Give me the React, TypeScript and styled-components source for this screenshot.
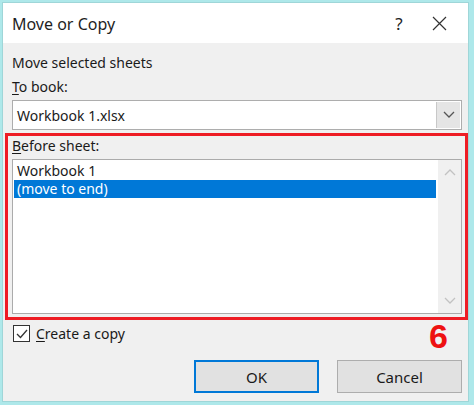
import React from "react";
import styled, { createGlobalStyle } from "styled-components";

const GlobalStyle = createGlobalStyle`
  html, body {
    margin: 0;
    padding: 0;
    background: #aee8ea;
  }
  body {
    font-family: "Noto Sans", "Open Sans", Arial, sans-serif;
  }
`;

const Frame = styled.div`
  width: 474px;
  height: 405px;
  box-sizing: border-box;
  padding: 3px 6px 4px 3px;
  background: #aee8ea;
`;

const Window = styled.div`
  height: 100%;
  display: flex;
  flex-direction: column;
  background: #f0f0f0;
  color: #1a1a1a;
  box-shadow: 0 0 0 1px #9fd6d8;
`;

const TitleBar = styled.div`
  height: 40px;
  flex: none;
  display: flex;
  align-items: center;
  background: #ffffff;
  padding-left: 9px;
`;

const Title = styled.div`
  flex: 1;
  font-size: 16px;
  color: #1e1e1e;
  margin-top: 2px;
`;

const TitleButton = styled.div<{ $w: number }>`
  width: ${(p) => p.$w}px;
  height: 40px;
  display: flex;
  align-items: center;
  justify-content: center;
  font-size: 17px;
  color: #222;
`;

const Body = styled.div`
  flex: 1;
  display: flex;
  flex-direction: column;
  padding: 10px 6px 0 9px;
  font-size: 14px;
`;

const Label = styled.div<{ $gap?: number }>`
  line-height: 20px;
  margin-top: ${(p) => p.$gap ?? 0}px;
`;

const Key = styled.span`
  text-decoration: underline;
  text-underline-offset: 2px;
`;

const Select = styled.div`
  margin-top: 3px;
  height: 30px;
  box-sizing: border-box;
  display: flex;
  border: 1px solid #adadad;
  background: #fff;
`;

const SelectValue = styled.div`
  flex: 1;
  display: flex;
  align-items: center;
  padding-left: 4px;
`;

const SelectArrow = styled.div`
  width: 23px;
  margin: 1px;
  display: flex;
  align-items: center;
  justify-content: center;
  background: #e5e5e5;
  border-left: 1px solid #c8c8c8;
`;

const Highlight = styled.div`
  margin: 3px -6px 0 -7px;
  border: 3px solid #ee1c24;
  padding: 0 3px 0 4px;
  height: 187px;
  box-sizing: border-box;
  display: flex;
  flex-direction: column;
`;

const ListBox = styled.div`
  margin-top: 3px;
  height: 155px;
  box-sizing: border-box;
  border: 1px solid #ababab;
  background: #fff;
  display: flex;
`;

const ListItems = styled.div`
  flex: 1;
  padding: 2px 0 0 1px;
`;

const ListItem = styled.div<{ $selected?: boolean }>`
  height: 18px;
  line-height: 18px;
  padding-left: 3px;
  background: ${(p) => (p.$selected ? "#0078d7" : "transparent")};
  color: ${(p) => (p.$selected ? "#fff" : "#1a1a1a")};
`;

const ScrollBar = styled.div`
  width: 23px;
  margin-left: 2px;
  background: #f0f0f0;
  display: flex;
  flex-direction: column;
  justify-content: space-between;
  align-items: center;
  padding: 8px 0 8px;
`;

const CheckRow = styled.div`
  display: flex;
  align-items: center;
  margin-top: 5px;
  height: 17px;
  position: relative;
`;

const CheckBox = styled.div`
  width: 17px;
  height: 17px;
  box-sizing: border-box;
  border: 1px solid #333;
  background: #fff;
  display: flex;
  align-items: center;
  justify-content: center;
  margin-left: 1px;
  margin-right: 6px;
`;

const StepMark = styled.div`
  position: absolute;
  right: 14px;
  top: -6px;
  font-family: "Liberation Sans", Arial, sans-serif;
  font-weight: bold;
  font-size: 34px;
  line-height: 34px;
  color: #ee1111;
`;

const Buttons = styled.div`
  display: flex;
  justify-content: flex-end;
  gap: 18px;
  margin-top: 18px;
`;

const Button = styled.div<{ $primary?: boolean }>`
  width: 125px;
  height: 33px;
  box-sizing: border-box;
  display: flex;
  align-items: center;
  justify-content: center;
  background: #e1e1e1;
  border: ${(p) => (p.$primary ? "2px solid #0078d7" : "1px solid #adadad")};
  font-size: 15px;
`;

const Chevron = ({ up, color }: { up?: boolean; color: string }) => (
  <svg width="12" height="8" viewBox="0 0 12 8">
    <path d={up ? "M1 7 L6 2 L11 7" : "M1 1 L6 6 L11 1"} fill="none" stroke={color} strokeWidth="1.3" />
  </svg>
);

export default function App() {
  return (
    <>
      <GlobalStyle />
      <Frame>
        <Window>
          <TitleBar>
            <Title>Move or Copy</Title>
            <TitleButton $w={30}>?</TitleButton>
            <TitleButton $w={50}>
              <svg width="15" height="15" viewBox="0 0 15 15">
                <path d="M1 1 L14 14 M14 1 L1 14" stroke="#333" strokeWidth="1.2" />
              </svg>
            </TitleButton>
            <div style={{ width: 4 }} />
          </TitleBar>
          <Body>
            <Label>Move selected sheets</Label>
            <Label $gap={4}>
              <Key>T</Key>o book:
            </Label>
            <Select>
              <SelectValue>Workbook 1.xlsx</SelectValue>
              <SelectArrow>
                <Chevron color="#555" />
              </SelectArrow>
            </Select>
            <Highlight>
              <Label>
                <Key>B</Key>efore sheet:
              </Label>
              <ListBox>
                <ListItems>
                  <ListItem>Workbook 1</ListItem>
                  <ListItem $selected>(move to end)</ListItem>
                </ListItems>
                <ScrollBar>
                  <Chevron up color="#c2c2c2" />
                  <Chevron color="#c2c2c2" />
                </ScrollBar>
              </ListBox>
            </Highlight>
            <CheckRow>
              <CheckBox>
                <svg width="12" height="10" viewBox="0 0 12 10">
                  <path d="M1 5 L4.5 8.5 L11 1" fill="none" stroke="#333" strokeWidth="1.3" />
                </svg>
              </CheckBox>
              <span>
                <Key>C</Key>reate a copy
              </span>
              <StepMark>6</StepMark>
            </CheckRow>
            <Buttons>
              <Button $primary>OK</Button>
              <Button>Cancel</Button>
            </Buttons>
          </Body>
        </Window>
      </Frame>
    </>
  );
}
